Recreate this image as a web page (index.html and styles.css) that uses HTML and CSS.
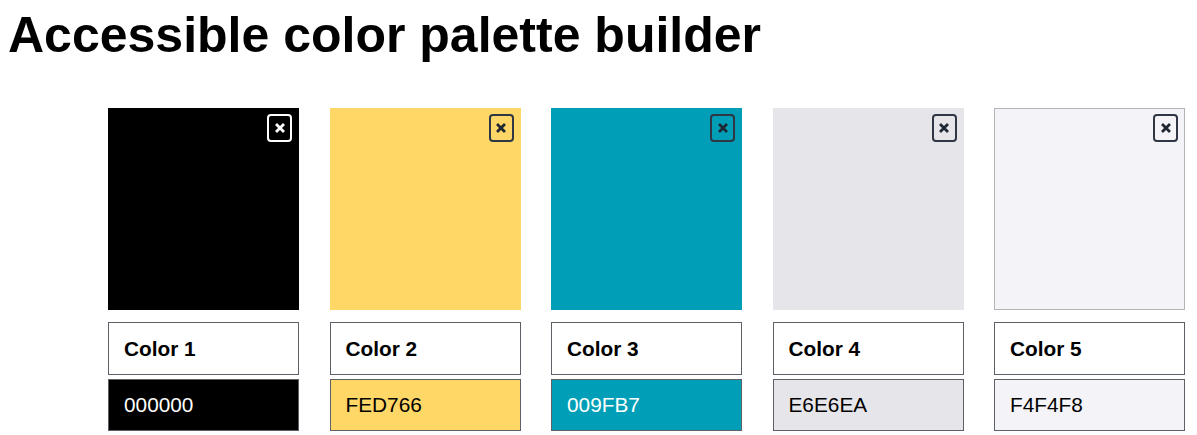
FILE: index.html
```html
<!DOCTYPE html>
<html>
<head>
    <link rel="stylesheet" href="styles.css">
</head>
<body>
    <div class="page">
        <h1 class="title">Accessible color palette builder</h1>
        <div class="palette">
            <div class="color-card">
                <div class="swatch dark" style="background: #000000;">
                    <button class="remove-button" aria-label="Remove color 1">
                        <svg viewBox="0 0 10 10"><path d="M2 2l6 6M8 2l-6 6"/></svg>
                    </button>
                </div>
                <div class="color-name">Color 1</div>
                <div class="color-hex dark" style="background: #000000;">000000</div>
            </div>
            <div class="color-card">
                <div class="swatch" style="background: #FED766;">
                    <button class="remove-button" aria-label="Remove color 2">
                        <svg viewBox="0 0 10 10"><path d="M2 2l6 6M8 2l-6 6"/></svg>
                    </button>
                </div>
                <div class="color-name">Color 2</div>
                <div class="color-hex" style="background: #FED766;">FED766</div>
            </div>
            <div class="color-card">
                <div class="swatch" style="background: #009FB7;">
                    <button class="remove-button" aria-label="Remove color 3">
                        <svg viewBox="0 0 10 10"><path d="M2 2l6 6M8 2l-6 6"/></svg>
                    </button>
                </div>
                <div class="color-name">Color 3</div>
                <div class="color-hex dark" style="background: #009FB7;">009FB7</div>
            </div>
            <div class="color-card">
                <div class="swatch" style="background: #E6E6EA;">
                    <button class="remove-button" aria-label="Remove color 4">
                        <svg viewBox="0 0 10 10"><path d="M2 2l6 6M8 2l-6 6"/></svg>
                    </button>
                </div>
                <div class="color-name">Color 4</div>
                <div class="color-hex" style="background: #E6E6EA;">E6E6EA</div>
            </div>
            <div class="color-card">
                <div class="swatch light" style="background: #F4F4F8;">
                    <button class="remove-button" aria-label="Remove color 5">
                        <svg viewBox="0 0 10 10"><path d="M2 2l6 6M8 2l-6 6"/></svg>
                    </button>
                </div>
                <div class="color-name">Color 5</div>
                <div class="color-hex" style="background: #F4F4F8;">F4F4F8</div>
            </div>
        </div>
    </div>
</body>
</html>
```

FILE: styles.css
```css
body {
    margin: 0;
    background: #ffffff;
    font-family: 'Liberation Sans', Arial, sans-serif;
    color: #000000;
}

.page {
    padding: 0 8px;
}

.title {
    margin: 7px 0 0;
    font-size: 50px;
    font-weight: 700;
    line-height: 57px;
}

.palette {
    display: grid;
    grid-template-columns: repeat(5, 191px);
    column-gap: 30.5px;
    margin: 44px 0 0 100px;
}

.color-card {
    display: flex;
    flex-direction: column;
}

.swatch {
    position: relative;
    height: 202px;
    margin-bottom: 12px;
    box-sizing: border-box;
}

.swatch.light {
    border: 1px solid #b4b4b8;
}

.remove-button {
    position: absolute;
    top: 6px;
    right: 7px;
    width: 25px;
    height: 28px;
    padding: 0;
    border: 2px solid #2f3744;
    border-radius: 4px;
    background: transparent;
    display: flex;
    align-items: center;
    justify-content: center;
    cursor: pointer;
}

.swatch.light .remove-button {
    top: 5px;
    right: 6px;
}

.remove-button svg {
    width: 10px;
    height: 10px;
    fill: none;
    stroke: #1f2733;
    stroke-width: 2.8;
    stroke-linecap: square;
}

.swatch.dark .remove-button {
    border-color: #ffffff;
}

.swatch.dark .remove-button svg {
    stroke: #ffffff;
}

.color-name,
.color-hex {
    display: flex;
    align-items: center;
    box-sizing: border-box;
    padding: 0 15px;
    border: 1px solid #5c6168;
    font-size: 20.8px;
}

.color-name {
    height: 53px;
    margin-bottom: 4px;
    font-weight: 700;
    background: #ffffff;
}

.color-hex {
    height: 52px;
}

.color-hex.dark {
    color: #ffffff;
}
```
